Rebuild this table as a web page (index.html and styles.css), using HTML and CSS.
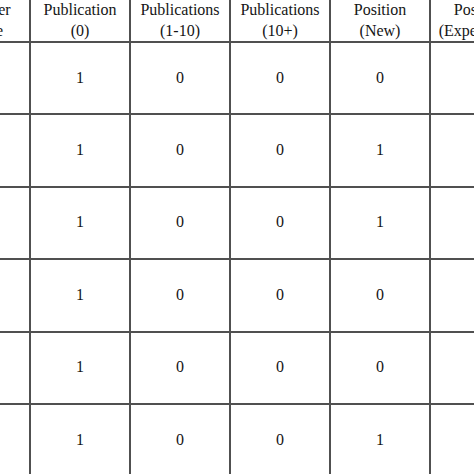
FILE: index.html
```html
<!DOCTYPE html>
<html>
<head>
<meta charset="utf-8">
<link rel="stylesheet" href="styles.css">
</head>
<body>
<div class="table">
  <div class="cell head">Reviewer<br>Degree</div>
  <div class="cell head">Publication<br>(0)</div>
  <div class="cell head">Publications<br>(1-10)</div>
  <div class="cell head">Publications<br>(10+)</div>
  <div class="cell head">Position<br>(New)</div>
  <div class="cell head">Position<br>(Experience)</div>

  <div class="cell"></div><div class="cell">1</div><div class="cell">0</div><div class="cell">0</div><div class="cell">0</div><div class="cell"></div>
  <div class="cell"></div><div class="cell">1</div><div class="cell">0</div><div class="cell">0</div><div class="cell">1</div><div class="cell"></div>
  <div class="cell"></div><div class="cell">1</div><div class="cell">0</div><div class="cell">0</div><div class="cell">1</div><div class="cell"></div>
  <div class="cell"></div><div class="cell">1</div><div class="cell">0</div><div class="cell">0</div><div class="cell">0</div><div class="cell"></div>
  <div class="cell"></div><div class="cell">1</div><div class="cell">0</div><div class="cell">0</div><div class="cell">0</div><div class="cell"></div>
  <div class="cell"></div><div class="cell">1</div><div class="cell">0</div><div class="cell">0</div><div class="cell">1</div><div class="cell"></div>
</div>
</body>
</html>
```
FILE: styles.css
```css
html, body {
  margin: 0;
  padding: 0;
  overflow: hidden;
  background: #ffffff;
}
body {
  width: 474px;
  height: 474px;
}
.table {
  display: grid;
  grid-template-columns: repeat(6, 100px);
  grid-template-rows: 44px repeat(6, 72.4px);
  margin-left: -69px;
  margin-top: -1px;
  width: 600px;
  font-family: "Liberation Serif", "Times New Roman", serif;
  font-size: 16px;
  color: #151515;
}
.cell {
  box-sizing: border-box;
  border-right: 2px solid #505050;
  border-bottom: 2px solid #505050;
  display: flex;
  align-items: center;
  justify-content: center;
  text-align: center;
  padding-bottom: 1px;
  white-space: nowrap;
}
.head {
  line-height: 21px;
  padding-bottom: 0;
  align-items: flex-start;
}
```
